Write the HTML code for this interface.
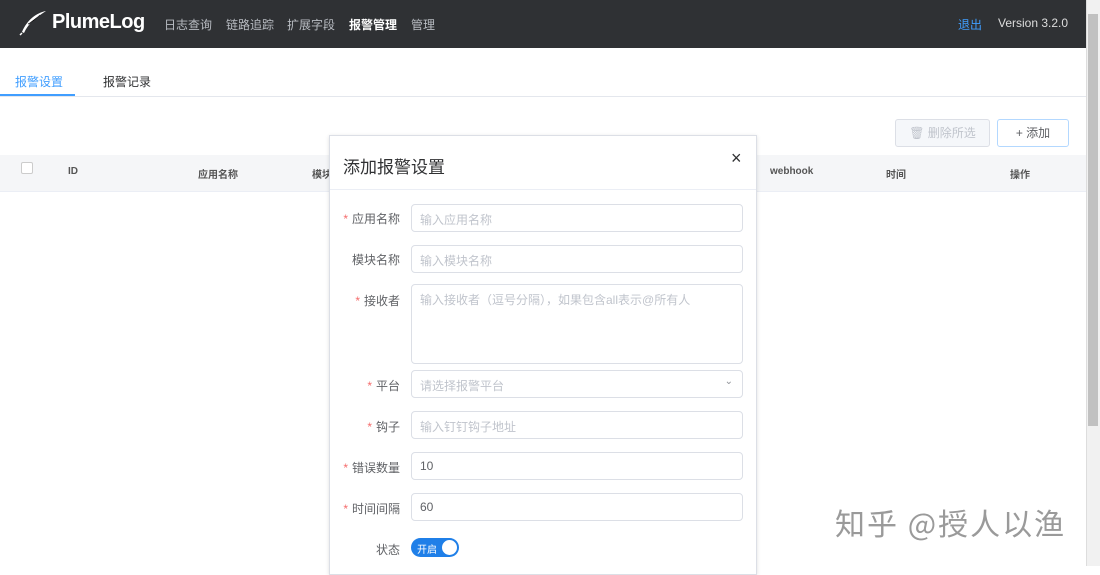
<!DOCTYPE html>
<html><head><meta charset="utf-8"><style>
*{box-sizing:border-box;margin:0;padding:0}
body{width:1100px;height:566px;overflow:hidden;background:#fff;font-family:"Liberation Sans","Noto Sans CJK SC",sans-serif;position:relative;color:#606266}
.hdr{position:absolute;left:0;top:0;width:1086px;height:48px;background:#2f3134}
.logo{position:absolute;left:52px;top:11px;color:#fff;font-size:20px;font-weight:bold;letter-spacing:-0.5px}
.nav{position:absolute;top:16px;font-size:12px;color:#b8bcc2;white-space:nowrap}
.sb{position:absolute;left:1086px;top:0;width:14px;height:566px;background:#f1f1f1;border-left:1px solid #ddd}
.thumb{position:absolute;left:1088px;top:14px;width:10px;height:412px;background:#c1c1c1}
.abs{position:absolute;white-space:nowrap}
.tab{position:absolute;top:73px;font-size:12px}
.btn{position:absolute;top:119px;height:28px;border:1px solid #dcdfe6;border-radius:3px;font-size:12px;text-align:center;line-height:26px}
.th{position:absolute;left:0;top:155px;width:1086px;height:37px;background:#f5f6f8;border-bottom:1px solid #ebeef5}
.thc{position:absolute;top:166px;font-size:10px;color:#555;font-weight:bold;white-space:nowrap}
.dlg{position:absolute;left:329px;top:135px;width:428px;height:440px;background:#fff;border:1px solid #dcdfe6;box-shadow:0 1px 4px rgba(0,0,0,.12)}
.lbl{position:absolute;right:700px;font-size:12px;color:#606266;text-align:right;white-space:nowrap}
.lbl b{color:#f56c6c;font-weight:normal;margin-right:4px}
.inp{position:absolute;left:411px;width:332px;height:28px;border:1px solid #dcdfe6;border-radius:4px;font-size:12px;color:#c0c4cc;padding:6px 8px;background:#fff;white-space:nowrap}
</style></head><body>
<div class="hdr">
<svg class="abs" style="left:18px;top:10px" width="30" height="26" viewBox="0 0 30 26"><path d="M28 1C18 3 9 10 4 22l2 1C10 14 17 8 28 1z" fill="#fff"/><path d="M4 23l-2 2" stroke="#fff" stroke-width="1.5"/><path d="M10 14c4-1 8-4 12-9" stroke="#2f3134" stroke-width="1"/></svg>
<div class="logo">PlumeLog</div>
<div class="nav" style="left:164px">日志查询</div>
<div class="nav" style="left:226px">链路追踪</div>
<div class="nav" style="left:287px">扩展字段</div>
<div class="nav" style="left:349px;color:#fff;font-weight:bold">报警管理</div>
<div class="nav" style="left:411px">管理</div>
<div class="nav" style="left:958px;color:#409eff">退出</div>
<div class="nav" style="left:998px;color:#ddd">Version 3.2.0</div>
</div>
<div class="tab" style="left:15px;color:#409eff">报警设置</div>
<div class="tab" style="left:103px;color:#303133">报警记录</div>
<div class="abs" style="left:0;top:94px;width:75px;height:2px;background:#409eff"></div>
<div class="abs" style="left:0;top:96px;width:1086px;height:1px;background:#e4e7ed"></div>
<div class="btn" style="left:895px;width:95px;color:#c0c4cc;background:#f5f7fa">🗑 删除所选</div>
<div class="btn" style="left:997px;width:72px;color:#606266;border-color:#b3d8ff">+ 添加</div>
<div class="th"></div>
<div class="abs" style="left:21px;top:162px;width:12px;height:12px;border:1px solid #ccc;background:#fff;border-radius:2px"></div>
<div class="thc" style="left:68px">ID</div>
<div class="thc" style="left:198px">应用名称</div>
<div class="thc" style="left:312px">模块</div>
<div class="thc" style="left:770px">webhook</div>
<div class="thc" style="left:886px">时间</div>
<div class="thc" style="left:1010px">操作</div>
<div class="dlg">
<div class="abs" style="left:13px;top:17px;font-size:17px;color:#303133">添加报警设置</div>
<div class="abs" style="left:401px;top:12px;font-size:18px;color:#303133">×</div>
<div class="abs" style="left:0;top:53px;width:426px;height:1px;background:#ebeef5"></div>
</div>
<div class="lbl" style="top:210px"><b>*</b>应用名称</div>
<div class="inp" style="top:204px">输入应用名称</div>
<div class="lbl" style="top:251px">模块名称</div>
<div class="inp" style="top:245px">输入模块名称</div>
<div class="lbl" style="top:292px"><b>*</b>接收者</div>
<div class="inp" style="top:284px;height:80px">输入接收者（逗号分隔），如果包含all表示@所有人</div>
<div class="lbl" style="top:377px"><b>*</b>平台</div>
<div class="inp" style="top:370px">请选择报警平台<span style="position:absolute;right:9px;top:5px;font-size:10px;color:#909399">⌄</span></div>
<div class="lbl" style="top:418px"><b>*</b>钩子</div>
<div class="inp" style="top:411px">输入钉钉钩子地址</div>
<div class="lbl" style="top:459px"><b>*</b>错误数量</div>
<div class="inp" style="top:452px;color:#606266">10</div>
<div class="lbl" style="top:500px"><b>*</b>时间间隔</div>
<div class="inp" style="top:493px;color:#606266">60</div>
<div class="lbl" style="top:541px">状态</div>
<div class="abs" style="left:411px;top:538px;width:48px;height:19px;background:#1f7fe8;border-radius:10px;color:#fff;font-size:10px;padding:3px 0 0 6px">开启<div class="abs" style="right:2px;top:2px;width:15px;height:15px;border-radius:50%;background:#fff"></div></div>
<div class="abs" style="left:835px;top:500px;font-size:30px;color:#9a9a9a;font-family:'Noto Sans CJK SC',sans-serif;letter-spacing:2px">知乎 @授人以渔</div>
<div class="sb"></div><div class="thumb"></div>
</body></html>
